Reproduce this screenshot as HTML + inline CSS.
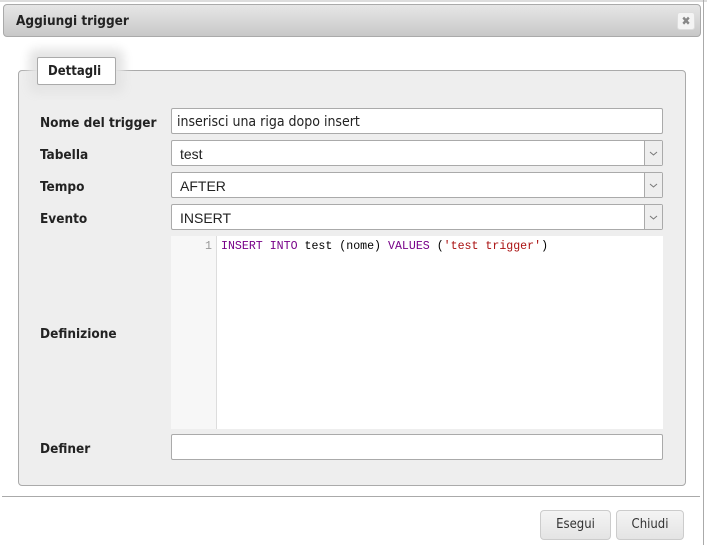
<!DOCTYPE html>
<html><head><style>
body{margin:0;width:707px;height:545px;background:#fff;position:relative;overflow:hidden;font-family:"DejaVu Sans Condensed","Liberation Sans",sans-serif;font-size:13px;color:#222}
.a{position:absolute;box-sizing:border-box}
.title{left:3px;top:4px;width:698px;height:33px;border:1px solid #aaa;border-radius:4px;background:linear-gradient(#e6e6e6,#c8c8c8);font-weight:bold;padding:8px 12px;font-size:13.5px}
.x{left:677px;top:12px;width:18px;height:18px;background:#f4f4f4;border:1px solid #ddd;border-radius:3px;color:#888;font-size:12px;text-align:center;line-height:16px;font-weight:bold}
.fs{left:18px;top:70px;width:668px;height:416px;background:#eee;border:1px solid #aaa;border-radius:4px}
.lg{left:37px;top:57px;width:79px;height:28px;background:#fff;border:1px solid #aaa;border-radius:2px;font-weight:bold;padding:6px 10px;box-shadow:0 0 10px 8px #e4e4e4}
.lb{left:40px;font-weight:bold;font-size:13.5px}
.in{left:171px;width:492px;height:26px;background:#fff;border:1px solid #aaa;border-radius:2px;padding:5px 8px;font-family:"Liberation Sans",sans-serif;font-size:14px}
.dd{position:absolute;right:0;top:0;width:17px;height:24px;border-left:1px solid #aaa;background:#eee}
.ed{left:171px;top:236px;width:492px;height:193px;background:#fff}
.gut{position:absolute;left:0;top:0;width:46px;height:193px;background:#f7f7f7;border-right:1px solid #ddd;font-family:"Liberation Mono",monospace;font-size:11.6px;color:#999;text-align:right;padding:4px 4px 0 0;box-sizing:border-box}
.code{position:absolute;left:50px;top:4px;font-family:"Liberation Mono",monospace;font-size:11.6px;white-space:pre;color:#000}
.k{color:#708}.s{color:#a11}
.btn{top:510px;height:30px;border:1px solid #ccc;border-radius:4px;background:linear-gradient(#f4f4f4,#e4e4e4);text-align:center;line-height:28px;font-size:13px;color:#333}
</style></head><body>
<div class="a" style="left:0;top:0;width:707px;height:2px;background:#ddd"></div>
<div class="a" style="left:703px;top:0;width:1px;height:545px;background:#aaa"></div>
<div class="a title">Aggiungi trigger</div>
<div class="a x">✖</div>
<div class="a fs"></div>
<div class="a lg">Dettagli</div>
<div class="a lb" style="top:115px">Nome del trigger</div>
<div class="a in" style="top:108px;font-family:'DejaVu Sans Condensed',sans-serif;font-size:14px;padding-left:5px">inserisci una riga dopo insert</div>
<div class="a lb" style="top:147px">Tabella</div>
<div class="a in" style="top:140px">test<div class="dd"><svg width="17" height="24"><path d="M5 11l3.5 3 3.5-3" fill="none" stroke="#777"/></svg></div></div>
<div class="a lb" style="top:179px">Tempo</div>
<div class="a in" style="top:172px">AFTER<div class="dd"><svg width="17" height="24"><path d="M5 11l3.5 3 3.5-3" fill="none" stroke="#777"/></svg></div></div>
<div class="a lb" style="top:211px">Evento</div>
<div class="a in" style="top:204px">INSERT<div class="dd"><svg width="17" height="24"><path d="M5 11l3.5 3 3.5-3" fill="none" stroke="#777"/></svg></div></div>
<div class="a lb" style="top:326px">Definizione</div>
<div class="a ed"><div class="gut">1</div><div class="code"><span class="k">INSERT INTO</span> test (nome) <span class="k">VALUES</span> (<span class="s">'test trigger'</span>)</div></div>
<div class="a lb" style="top:441px">Definer</div>
<div class="a in" style="top:434px"></div>
<div class="a" style="left:2px;top:496px;width:698px;height:1px;background:#aaa"></div>
<div class="a btn" style="left:540px;width:71px">Esegui</div>
<div class="a btn" style="left:616px;width:68px">Chiudi</div>
</body></html>
